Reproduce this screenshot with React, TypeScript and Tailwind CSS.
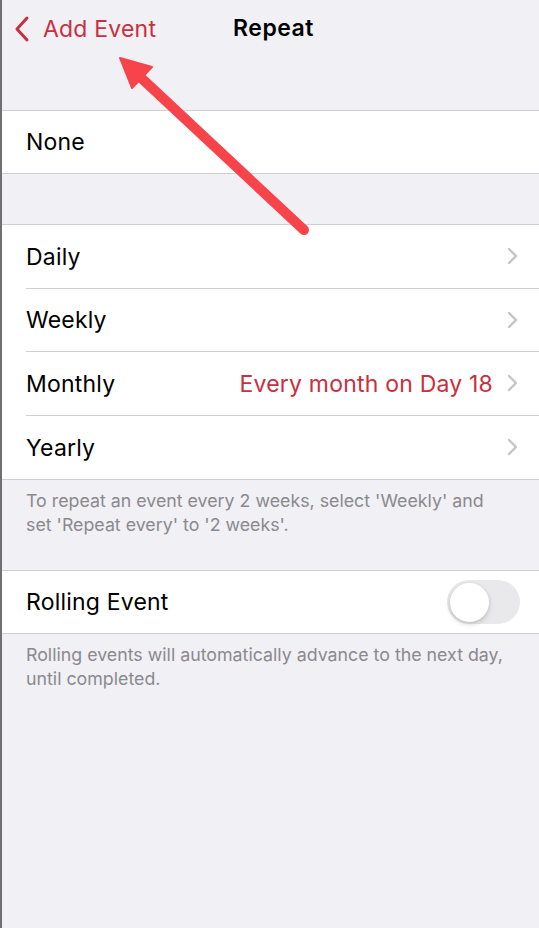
import React from 'react'

const font = { fontFamily: 'Inter, "Noto Sans", sans-serif' }

function Chevron() {
  return (
    <svg width="11" height="18" viewBox="0 0 11 18" fill="none" className="shrink-0">
      <path d="M2 2l7 7-7 7" stroke="#c4c4c7" strokeWidth="2.4" strokeLinecap="round" strokeLinejoin="round" />
    </svg>
  )
}

function Row({ label, value, last }: { label: string; value?: string; last?: boolean }) {
  return (
    <div className="pl-[24px] bg-white">
      <div className={`h-[63.5px] flex items-center pr-[21px] ${last ? '' : 'border-b border-[#cfced3]'}`}>
        <span className="text-[23px] tracking-[0.2px] text-black flex-1 pt-[1px]">{label}</span>
        {value && <span className="text-[23px] tracking-[0.2px] text-[#c92f40] mr-[14px] pt-[1px]">{value}</span>}
        <Chevron />
      </div>
    </div>
  )
}

export default function App() {
  return (
    <div style={font} className="w-[539px] h-[928px] bg-[#f1f0f5] border-l-2 border-[#707070] relative overflow-hidden">
      {/* nav bar */}
      <div className="h-[56px] relative flex items-center justify-center">
        <div className="absolute left-[12px] top-[12px] flex items-center gap-[13px]">
          <svg width="16" height="28" viewBox="0 0 16 28" fill="none">
            <path d="M13 3L3 14l10 11" stroke="#c92f40" strokeWidth="3" strokeLinecap="round" strokeLinejoin="round" />
          </svg>
          <span className="text-[23px] tracking-[0.2px] text-[#c92f40]">Add Event</span>
        </div>
        <span className="text-[23px] tracking-[0.5px] font-semibold text-black ml-[6px]">Repeat</span>
      </div>

      <div className="mt-[54px] bg-white border-y border-[#cfced3] h-[64px] flex items-center pl-[24px]">
        <span className="text-[23px] tracking-[0.2px] text-black pt-[1px]">None</span>
      </div>

      <div className="mt-[50px] border-y border-[#cfced3]">
        <Row label="Daily" />
        <Row label="Weekly" />
        <Row label="Monthly" value="Every month on Day 18" />
        <Row label="Yearly" last />
      </div>

      <p className="pl-[24px] pr-[30px] pt-[9px] text-[17.8px] leading-[24px] text-[#8a898e]">
        To repeat an event every 2 weeks, select 'Weekly' and set 'Repeat every' to '2 weeks'.
      </p>

      <div className="mt-[33px] bg-white border-y border-[#cfced3] h-[64px] flex items-center pl-[24px] pr-[19px]">
        <span className="text-[23px] tracking-[0.2px] text-black flex-1 pt-[1px]">Rolling Event</span>
        <div className="w-[73px] h-[44px] rounded-full bg-[#e9e9eb] p-[3px] flex items-center">
          <div className="w-[39px] h-[39px] rounded-full bg-white shadow-[0_2px_5px_rgba(0,0,0,0.2)]" />
        </div>
      </div>

      <p className="pl-[24px] pr-[30px] pt-[9px] text-[17.8px] leading-[24px] text-[#8a898e]">
        Rolling events will automatically advance to the next day, until completed.
      </p>

      {/* annotation arrow */}
      <svg className="absolute left-0 top-0 pointer-events-none" width="539" height="260" viewBox="0 0 539 260">
        <line x1="302" y1="230" x2="135" y2="74" stroke="#f7434a" strokeWidth="10" strokeLinecap="round" />
        <polygon points="118,58 150,67 130,88" fill="#f7434a" stroke="#f7434a" strokeWidth="2" strokeLinejoin="round" />
      </svg>
    </div>
  )
}
